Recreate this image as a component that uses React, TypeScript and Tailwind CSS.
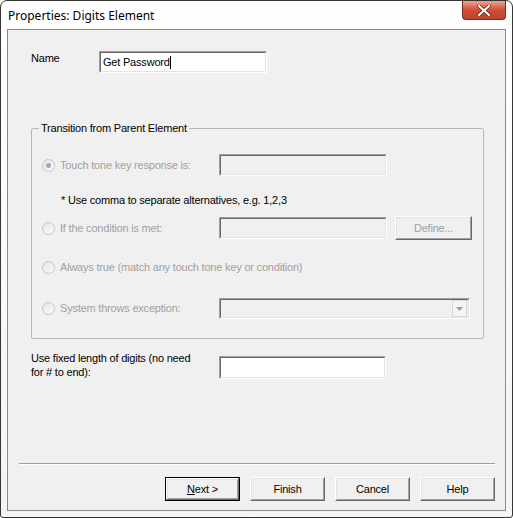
import React from "react";

const font = { fontFamily: '"Liberation Sans", Arial, sans-serif' };

function Radio({ checked = false }: { checked?: boolean }) {
  return (
    <div className="w-[13px] h-[13px] rounded-full border border-[#c4c4c4] bg-gradient-to-br from-[#e4e4e4] to-[#fbfbfb] flex items-center justify-center shrink-0">
      {checked && <div className="w-[5px] h-[5px] rounded-full bg-[#a8a8a8]" />}
    </div>
  );
}

function Sunken({ w, h, white = false, children }: { w: string; h: string; white?: boolean; children?: React.ReactNode }) {
  return (
    <div
      className={`${w} ${h} border border-t-[#a0a0a0] border-l-[#a0a0a0] border-b-[#ffffff] border-r-[#ffffff] shrink-0`}
    >
      <div
        className={`w-full h-full border border-t-[#696969] border-l-[#696969] border-b-[#e3e3e3] border-r-[#e3e3e3] ${white ? "bg-white" : "bg-[#f0f0f0]"} flex items-center`}
      >
        {children}
      </div>
    </div>
  );
}

function Btn({ label, def = false, disabled = false, w = "w-[75px]" }: { label: React.ReactNode; def?: boolean; disabled?: boolean; w?: string }) {
  return (
    <div className={`${w} h-[24px] ${def ? "border border-[#000]" : ""} shrink-0`}>
      <div className="w-full h-full border border-t-[#ffffff] border-l-[#ffffff] border-b-[#696969] border-r-[#696969]">
        <div
          className={`w-full h-full border border-t-[#e3e3e3] border-l-[#e3e3e3] border-b-[#a0a0a0] border-r-[#a0a0a0] bg-[#f0f0f0] flex items-center justify-center text-[11px] ${disabled ? "text-[#a0a0a0]" : "text-black"}`}
        >
          {label}
        </div>
      </div>
    </div>
  );
}

export default function App() {
  return (
    <div className="w-[513px] h-[518px] bg-[#fbfbfb]" style={font}>
      <div className="w-[513px] h-[518px] border border-[#363636] rounded-t-[7px] rounded-b-[3px] bg-gradient-to-b from-[#ffffff] to-[#f4f4f4] flex flex-col">
        {/* Title bar */}
        <div className="h-[28px] flex justify-between shrink-0">
          <div className="pl-[7px] pt-[6px] text-[12px] text-black" style={{ fontFamily: '"Noto Sans", "Open Sans", sans-serif' }}>
            Properties: Digits Element
          </div>
          <div className="mr-[6px] w-[44px] h-[19px] rounded-b-[4px] border border-t-0 border-[#7a2a1c] bg-gradient-to-b from-[#e8a493] via-[#cf4b34] to-[#c0452d] flex items-center justify-center">
            <svg width="14" height="11" viewBox="0 0 14 11">
              <path d="M2 1 L12 10 M12 1 L2 10" stroke="#5a1a10" strokeWidth="3.6" strokeLinecap="round" />
              <path d="M2 1 L12 10 M12 1 L2 10" stroke="#ffffff" strokeWidth="2.2" strokeLinecap="round" />
            </svg>
          </div>
        </div>
        {/* Client area */}
        <div className="mx-[6px] h-[482px] border border-[#8a8a8a] bg-[#f0f0f0] text-[11px] tracking-[-0.2px] text-black flex flex-col">
          {/* Name */}
          <div className="flex items-start pl-[23px] pt-[21px]">
            <div className="w-[68px] leading-[14px]">Name</div>
            <Sunken w="w-[168px]" h="h-[22px]" white>
              <span className="pl-[2px] text-[11px]">Get Password</span>
              <span className="w-px h-[13px] bg-black" />
            </Sunken>
          </div>

          {/* Group box */}
          <div className="ml-[23px] mt-[55px] w-[453px] h-[211px] border border-[#b8b8b8] rounded-[2px] relative flex flex-col">
            <div className="absolute -top-[8px] left-[7px] bg-[#f0f0f0] px-[2px] leading-[14px]">Transition from Parent Element</div>
            <div className="flex items-center mt-[25px] h-[22px]">
              <div className="ml-[10px]"><Radio checked /></div>
              <div className="ml-[5px] w-[159px] text-[#a0a0a0]">Touch tone key response is:</div>
              <Sunken w="w-[168px]" h="h-[22px]" />
            </div>
            <div className="ml-[29px] mt-[17px] leading-[14px]">* Use comma to separate alternatives, e.g. 1,2,3</div>
            <div className="flex items-center mt-[9px] h-[24px]">
              <div className="ml-[10px]"><Radio /></div>
              <div className="ml-[5px] w-[159px] text-[#a0a0a0]">If the condition is met:</div>
              <Sunken w="w-[168px]" h="h-[22px]" />
              <div className="ml-[8px]"><Btn label="Define..." disabled w="w-[77px]" /></div>
            </div>
            <div className="flex items-center mt-[18px] h-[18px]">
              <div className="ml-[10px]"><Radio /></div>
              <div className="ml-[5px] text-[#a0a0a0]">Always true (match any touch tone key or condition)</div>
            </div>
            <div className="flex items-center mt-[22px] h-[21px]">
              <div className="ml-[10px]"><Radio /></div>
              <div className="ml-[5px] w-[159px] text-[#a0a0a0]">System throws exception:</div>
              <Sunken w="w-[251px]" h="h-[21px]">
                <div className="ml-auto mr-px w-[15px] h-[17px] border border-[#d8d8d8] bg-[#f4f4f4] flex items-center justify-center">
                  <svg width="7" height="4" viewBox="0 0 7 4"><path d="M0 0 L7 0 L3.5 4 Z" fill="#a0a0a0" /></svg>
                </div>
              </Sunken>
            </div>
          </div>

          {/* Fixed length */}
          <div className="flex items-start pl-[23px] mt-[11px]">
            <div className="w-[188px] leading-[14px] pt-[1px]">Use fixed length of digits (no need<br />for # to end):</div>
            <div className="mt-[6px]">
              <Sunken w="w-[167px]" h="h-[23px]" white />
            </div>
          </div>

          {/* Separator */}
          <div className="ml-[11px] mr-[10px] mt-[84px] h-[2px] border-t border-[#a0a0a0] border-b border-b-[#ffffff]" />

          {/* Buttons */}
          <div className="flex justify-end gap-[10px] mr-[10px] mt-[12px]">
            <Btn label={<span><u>N</u>ext &gt;</span>} def />
            <Btn label="Finish" />
            <Btn label="Cancel" />
            <Btn label="Help" />
          </div>
        </div>
      </div>
    </div>
  );
}
